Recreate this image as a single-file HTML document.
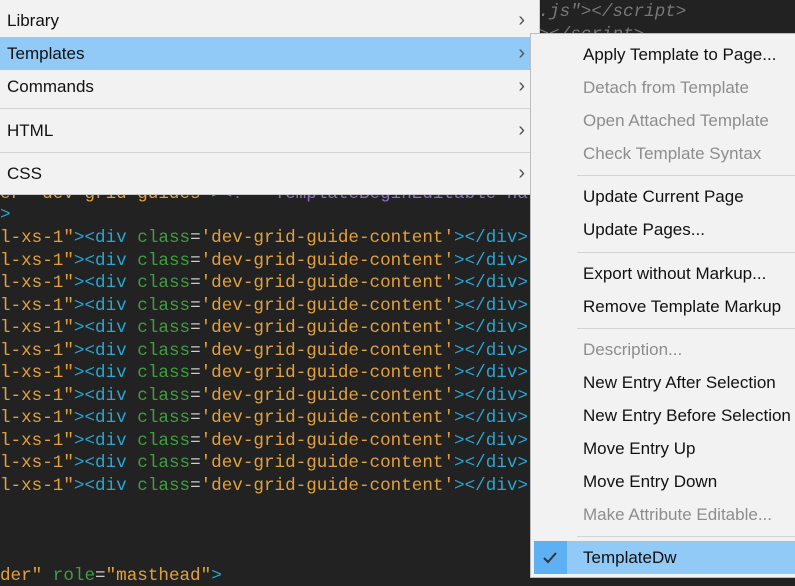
<!DOCTYPE html>
<html><head><meta charset="utf-8"><style>
*{margin:0;padding:0;box-sizing:border-box}
body{width:795px;height:580px;background:#222;overflow:hidden;position:relative;font-family:"Liberation Sans",sans-serif}
.code{position:absolute;left:0;font-family:"Liberation Mono",monospace;font-size:17.6px;white-space:pre;line-height:20px}
.o{color:#e3a13e}.c{color:#2aa6d3}.g{color:#3f9f3f}.w{color:#ccc}.p{color:#8c6fc4}
.menu{position:absolute;background:#f2f2f2;border:1px solid #c9c9c9}
.it{position:absolute;left:0;right:0;height:33px;line-height:33px;font-size:17px;color:#111}
.sep{position:absolute;height:1px;background:#d4d4d4}
.chev{position:absolute;right:14px;top:0;color:#555;font-size:20px}
.dis{color:#8d8d8d}
</style></head><body>
<div class="code" style="left:528px;top:2px;color:#777;font-style:italic">n.js"&gt;&lt;/script&gt;</div>
<div class="code" style="left:528px;top:25px;color:#777;font-style:italic">"&gt;&lt;/script&gt;</div>
<div class="code" style="top:184px"><span class="o">er" dev-grid-guides"</span><span class="c">&gt;</span><span class="p">&lt;!-- TemplateBeginEditable na</span></div>
<div class="code c" style="top:205px">&gt;</div>
<div id="lines"></div>
<div class="code" style="top:566px"><span class="o">der"</span> <span class="g">role</span><span class="w">=</span><span class="o">"masthead"</span><span class="c">&gt;</span></div>
<script>
var h='';for(var i=0;i<12;i++){h+='<div class="code" style="top:'+(228+i*22.5)+'px"><span class="o">l-xs-1"</span><span class="c">&gt;&lt;div</span> <span class="g">class</span><span class="w">=</span><span class="o">\'dev-grid-guide-content\'</span><span class="c">&gt;&lt;/div&gt;</span></div>';}
document.getElementById('lines').innerHTML=h;
</script>
<div class="menu" style="left:-1px;top:-1px;width:541px;height:196px">
<div class="it" style="top:4px;padding-left:7px">Library<span class="chev">›</span></div>
<div class="it" style="top:37px;padding-left:7px;background:#91c9f7">Templates<span class="chev">›</span></div>
<div class="it" style="top:70px;padding-left:7px">Commands<span class="chev">›</span></div>
<div class="sep" style="top:108px;left:0;right:0"></div>
<div class="it" style="top:114px;padding-left:7px">HTML<span class="chev">›</span></div>
<div class="sep" style="top:152px;left:0;right:0"></div>
<div class="it" style="top:157px;padding-left:7px">CSS<span class="chev">›</span></div>
</div>
<div class="menu" style="left:530px;top:33px;width:270px;height:545px;border-color:#bdbdbd">
<div class="it" style="top:4px;padding-left:52px">Apply Template to Page...</div>
<div class="it dis" style="top:37px;padding-left:52px">Detach from Template</div>
<div class="it dis" style="top:70px;padding-left:52px">Open Attached Template</div>
<div class="it dis" style="top:103px;padding-left:52px">Check Template Syntax</div>
<div class="sep" style="top:141px;left:46px;right:0"></div>
<div class="it" style="top:146px;padding-left:52px">Update Current Page</div>
<div class="it" style="top:179px;padding-left:52px">Update Pages...</div>
<div class="sep" style="top:218px;left:46px;right:0"></div>
<div class="it" style="top:223px;padding-left:52px">Export without Markup...</div>
<div class="it" style="top:256px;padding-left:52px">Remove Template Markup</div>
<div class="sep" style="top:294px;left:46px;right:0"></div>
<div class="it dis" style="top:299px;padding-left:52px">Description...</div>
<div class="it" style="top:332px;padding-left:52px">New Entry After Selection</div>
<div class="it" style="top:365px;padding-left:52px">New Entry Before Selection</div>
<div class="it" style="top:398px;padding-left:52px">Move Entry Up</div>
<div class="it" style="top:431px;padding-left:52px">Move Entry Down</div>
<div class="it dis" style="top:464px;padding-left:52px">Make Attribute Editable...</div>
<div class="sep" style="top:502px;left:46px;right:0"></div>
<div class="it" style="top:507px;left:3px;padding-left:49px;background:#91c9f7">TemplateDw
<div style="position:absolute;left:0;top:0;width:33px;height:33px;background:#5eb0f5">
<svg width="33" height="33" viewBox="0 0 33 33"><path d="M10 17 L14 21 L22 12" fill="none" stroke="#333" stroke-width="2"/></svg></div></div>
</div>
</body></html>
